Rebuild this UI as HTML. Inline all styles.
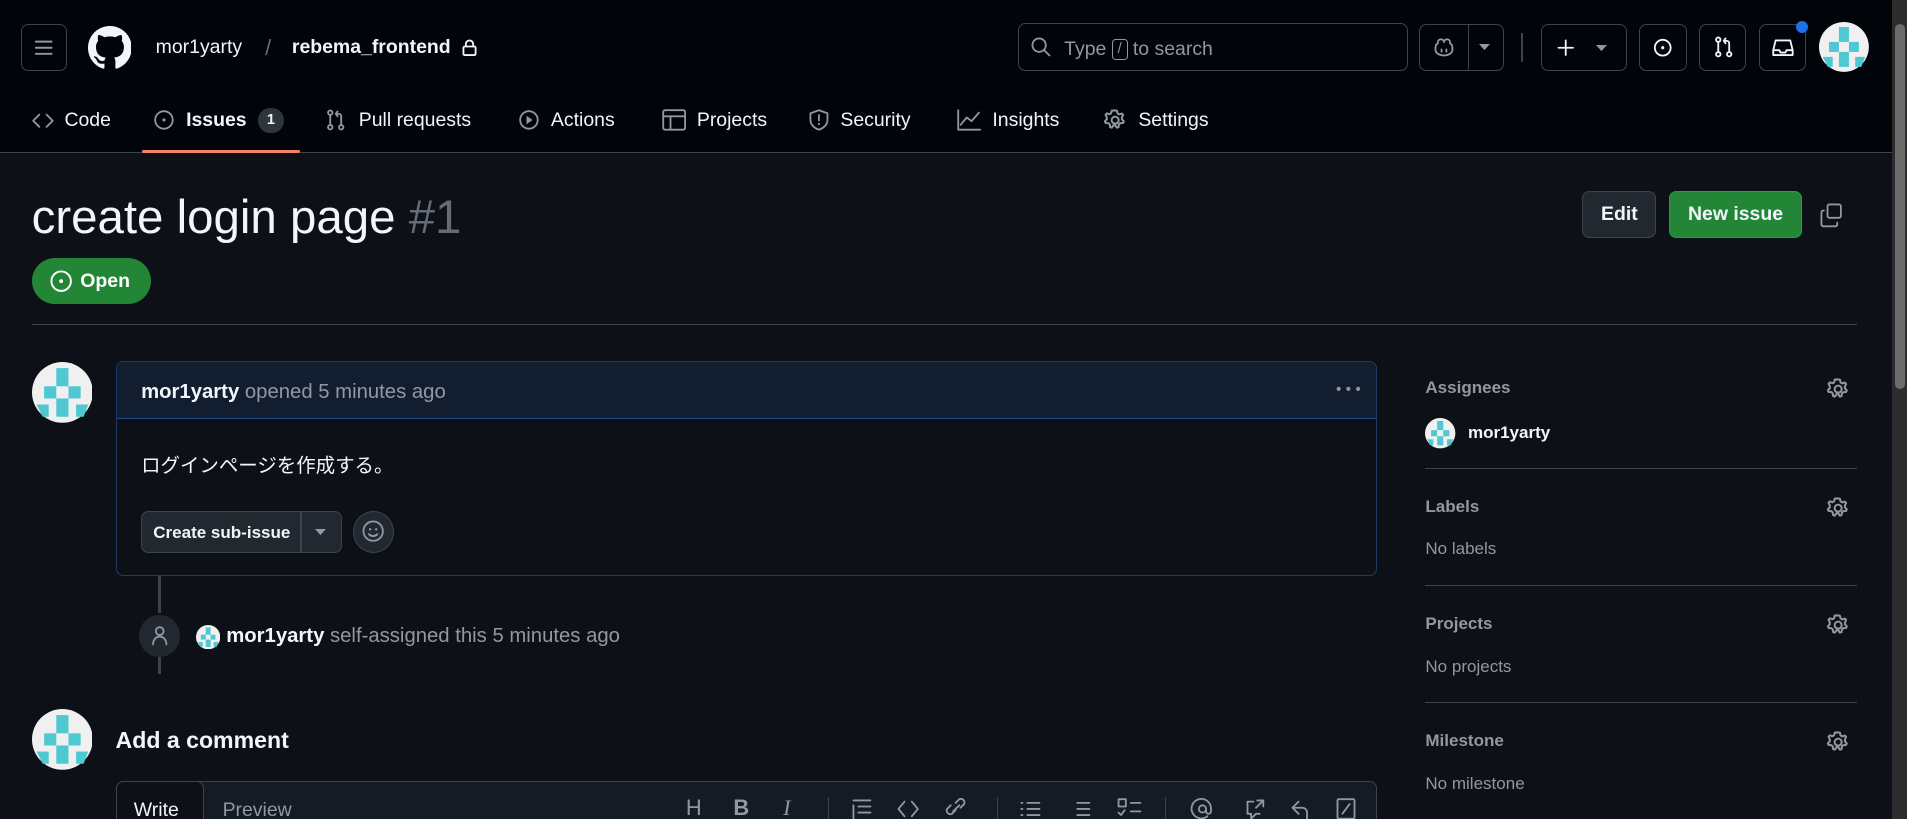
<!DOCTYPE html>
<html><head><meta charset="utf-8">
<style>
*{box-sizing:border-box;margin:0;padding:0}
html,body{width:1907px;height:819px;overflow:hidden;background:#0d1117}
#r{zoom:1.2162;width:1568px;height:673px;position:relative;font-family:"Liberation Sans","Noto Sans CJK JP",sans-serif;color:#f0f6fc;background:#0d1117;overflow:hidden}
.a{position:absolute}
svg{display:block}
.ic{fill:none;stroke:#9198a1;stroke-width:1.5;stroke-linecap:round;stroke-linejoin:round}
.btn{position:absolute;border:1px solid #3d444d;border-radius:6px}
.tab{position:absolute;top:88px;font-size:16px;color:#f0f6fc;display:flex;align-items:center;gap:9px;height:22px}
.muted{color:#9198a1}
.sbh{position:absolute;left:1172px;font-size:14px;font-weight:bold;color:#9198a1}
.sbt{position:absolute;left:1172px;font-size:14px;color:#9198a1}
.sep{position:absolute;left:1172px;width:355px;height:1px;background:#3d444d}
.gear{position:absolute;left:1501px}
</style></head><body><div id="r">
<svg width="0" height="0" style="position:absolute"><defs>
<g id="av"><circle cx="20" cy="20" r="20" fill="#f0f0f0"/><rect x="16" y="4" width="8" height="32" fill="#4fc8d2"/><rect x="8" y="16" width="24" height="8" fill="#4fc8d2"/><rect x="16" y="16" width="8" height="8" fill="#f0f0f0"/><path d="M3 28h8v8H7z M29 28h8l-3 8h-5z" fill="#4fc8d2"/></g>
<g id="gr"><path class="ic" d="M9 1.8l1.3.2.5 2 1.2.7 2-.6.9 1-.9 1.9v1.4l1.4 1.5-.6 1.2-2 .1-1 1-.3 2-1.3.3-1.1-1.7h-1.4l-1.1 1.7-1.3-.3-.3-2-1-1-2 -.1-.6-1.2 1.4-1.5V6.9l-.9-1.9.9-1 2 .6 1.2-.7.5-2z"/><circle class="ic" cx="9" cy="9" r="2.6"/></g>
</defs></svg>

<div class="a" style="left:0;top:0;width:1568px;height:126px;background:#010409;border-bottom:1px solid #3d444d"></div>
<div class="btn" style="left:17px;top:20px;width:38px;height:38px"></div>
<svg class="a" style="left:28px;top:31px" width="16" height="16"><path stroke="#9198a1" stroke-width="1.6" stroke-linecap="round" d="M1.5 3h13M1.5 8h13M1.5 13h13"/></svg>
<svg class="a" style="left:72px;top:21px" width="36" height="36" viewBox="0 0 16 16"><path fill="#f0f6fc" d="M8 0C3.58 0 0 3.58 0 8c0 3.54 2.29 6.53 5.47 7.59.4.07.55-.17.55-.38 0-.19-.01-.82-.01-1.49-2.01.37-2.53-.49-2.69-.94-.09-.23-.48-.94-.82-1.13-.28-.15-.68-.52-.01-.53.63-.01 1.08.58 1.23.82.72 1.21 1.87.87 2.33.66.07-.52.28-.87.51-1.07-1.78-.2-3.64-.89-3.64-3.95 0-.87.31-1.59.82-2.15-.08-.2-.36-1.02.08-2.12 0 0 .67-.21 2.2.82.64-.18 1.32-.27 2-.27.68 0 1.36.09 2 .27 1.53-1.04 2.2-.82 2.2-.82.44 1.1.16 1.92.08 2.12.51.56.82 1.27.82 2.15 0 3.07-1.87 3.75-3.65 3.95.29.25.54.73.54 1.48 0 1.07-.01 1.93-.01 2.2 0 .21.15.46.55.38A8.013 8.013 0 0016 8c0-4.42-3.58-8-8-8z"/></svg>
<div class="a" style="left:128px;top:30px;font-size:16px">mor1yarty</div>
<div class="a muted" style="left:218px;top:29px;font-size:18px;color:#656c76">/</div>
<div class="a" style="left:240px;top:30px;font-size:16px;font-weight:bold">rebema_frontend</div>
<svg class="a" style="left:379px;top:31px" width="14" height="16"><rect x="2" y="7" width="10" height="7" rx="1" class="ic" style="stroke:#f0f6fc"/><path d="M4 7V5a3 3 0 016 0v2" class="ic" style="stroke:#f0f6fc"/></svg>

<div class="btn" style="left:837px;top:19px;width:321px;height:39px;background:#010409"></div>
<svg class="a" style="left:847px;top:30px" width="18" height="18"><circle cx="7.5" cy="7.5" r="5.5" class="ic"/><path d="M11.5 11.5l4.5 4.5" class="ic"/></svg>
<div class="a muted" style="left:875px;top:31px;font-size:16px">Type <span style="display:inline-block;border:1px solid #9198a1;border-radius:3px;font-size:12px;padding:0 4px;line-height:15px;vertical-align:1px">/</span> to search</div>

<div class="btn" style="left:1167px;top:20px;width:70px;height:38px"></div>
<div class="a" style="left:1207px;top:20px;width:1px;height:38px;background:#3d444d"></div>
<svg class="a" style="left:1178px;top:30px" width="18" height="18"><path class="ic" d="M4 5c0-3 5-3 5 0 0-3 5-3 5 0v1c2 1 2 3 2 5 0 3-3 5-7 5s-7-2-7-5c0-2 0-4 2-5z"/><path class="ic" d="M7 11v2M11 11v2"/></svg>
<svg class="a" style="left:1216px;top:36px" width="10" height="6"><path d="M0 0h9L4.5 5z" fill="#9198a1"/></svg>
<div class="a" style="left:1251px;top:27px;width:1px;height:24px;background:#3d444d"></div>
<div class="btn" style="left:1267px;top:20px;width:71px;height:38px"></div>
<svg class="a" style="left:1279px;top:31px" width="16" height="16"><path class="ic" style="stroke:#f0f6fc" d="M8 2v12M2 8h12"/></svg>
<svg class="a" style="left:1312px;top:37px" width="10" height="6"><path d="M0 0h9L4.5 5z" fill="#9198a1"/></svg>
<div class="btn" style="left:1348px;top:20px;width:39px;height:38px"></div>
<svg class="a" style="left:1359px;top:31px" width="16" height="16"><circle cx="8" cy="8" r="6.5" class="ic" style="stroke:#f0f6fc"/><circle cx="8" cy="8" r="1.3" fill="#f0f6fc"/></svg>
<div class="btn" style="left:1397px;top:20px;width:39px;height:38px"></div>
<svg class="a" style="left:1409px;top:30px" width="16" height="18"><circle cx="3.5" cy="3" r="1.8" class="ic" style="stroke:#f0f6fc"/><circle cx="3.5" cy="15" r="1.8" class="ic" style="stroke:#f0f6fc"/><circle cx="12.5" cy="15" r="1.8" class="ic" style="stroke:#f0f6fc"/><path class="ic" style="stroke:#f0f6fc" d="M3.5 5v8M12.5 13V6a2 2 0 00-2-2H8M9.5 2L8 4l1.5 2"/></svg>
<div class="btn" style="left:1446px;top:20px;width:39px;height:38px"></div>
<svg class="a" style="left:1457px;top:31px" width="18" height="16"><path class="ic" style="stroke:#f0f6fc" d="M3 2h12l2 8v4H1v-4zM1 10h5l1 2h4l1-2h5"/></svg>
<div class="a" style="left:1477px;top:17px;width:10px;height:10px;border-radius:50%;background:#1f6feb"></div>
<svg class="a" style="left:1496px;top:18px" width="41" height="41" viewBox="0 0 40 40"><use href="#av"/></svg>

<div class="tab" style="left:26px"><svg width="18" height="16"><path class="ic" d="M6 3L1 8l5 5M12 3l5 5-5 5"/></svg>Code</div>
<div class="tab" style="left:126px;font-weight:bold"><svg width="18" height="18"><circle cx="9" cy="9" r="7.2" class="ic"/><circle cx="9" cy="9" r="1.3" fill="#9198a1"/></svg>Issues<span style="display:inline-block;background:#2f353d;border-radius:10px;font-size:12px;width:22px;text-align:center;line-height:20px">1</span></div>
<div class="a" style="left:117px;top:123px;width:130px;height:3px;border-radius:2px;background:#f78166"></div>
<div class="tab" style="left:268px"><svg width="18" height="18"><circle cx="3.5" cy="3" r="1.8" class="ic"/><circle cx="3.5" cy="15" r="1.8" class="ic"/><circle cx="12.5" cy="15" r="1.8" class="ic"/><path class="ic" d="M3.5 5v8M12.5 13V6a2 2 0 00-2-2H8M9.5 2L8 4l1.5 2"/></svg>Pull requests</div>
<div class="tab" style="left:426px"><svg width="18" height="18"><circle cx="9" cy="9" r="7.2" class="ic"/><path d="M7 5.5v7l5-3.5z" fill="#9198a1"/></svg>Actions</div>
<div class="tab" style="left:544px"><svg width="20" height="18"><rect x="1" y="1" width="18" height="16" rx="1.5" class="ic"/><path class="ic" d="M1 6h18M7 6v11"/></svg>Projects</div>
<div class="tab" style="left:664px"><svg width="18" height="18"><path class="ic" d="M9 1l7 2.5V9c0 4-3.5 7-7 8-3.5-1-7-4-7-8V3.5z"/><path class="ic" d="M9 5v4.5"/><circle cx="9" cy="12.3" r=".9" fill="#9198a1"/></svg>Security</div>
<div class="tab" style="left:787px"><svg width="20" height="18"><path class="ic" d="M1 1v16h18M3 13l5-6 4 3 6-7"/></svg>Insights</div>
<div class="tab" style="left:907px"><svg width="20" height="20" viewBox="0 0 18 18"><use href="#gr"/></svg>Settings</div>

<div class="a" style="left:26px;top:157px;font-size:39px;line-height:44px">create login page <span style="color:#656c76">#1</span></div>
<div class="btn" style="left:1301px;top:157px;width:61px;height:39px;background:#212830;font-size:16px;font-weight:bold;text-align:center;line-height:37px">Edit</div>
<div class="btn" style="left:1372px;top:157px;width:110px;height:39px;background:#238636;border-color:#2e9a40;font-size:16px;font-weight:bold;text-align:center;line-height:37px">New issue</div>
<svg class="a" style="left:1496px;top:166px" width="22" height="22"><rect x="7" y="2" width="11" height="11" rx="1.5" class="ic"/><path class="ic" d="M4 7H3.5A1.5 1.5 0 002 8.5v10A1.5 1.5 0 003.5 20h10a1.5 1.5 0 001.5-1.5V17"/></svg>
<div class="a" style="left:26px;top:212px;width:98px;height:38px;border-radius:19px;background:#238636"></div>
<svg class="a" style="left:40px;top:221px" width="20" height="20"><circle cx="10" cy="10" r="8" fill="none" stroke="#fff" stroke-width="1.6"/><circle cx="10" cy="10" r="1.6" fill="#fff"/></svg>
<div class="a" style="left:66px;top:222px;font-size:16px;font-weight:bold;color:#fff">Open</div>
<div class="a" style="left:26px;top:266px;width:1501px;height:1px;background:#3d444d"></div>

<svg class="a" style="left:26px;top:298px" width="50" height="50" viewBox="0 0 40 40"><use href="#av"/></svg>
<div class="a" style="left:95px;top:297px;width:1037px;height:177px;border:1px solid #1f3b63;border-radius:6px;overflow:hidden">
 <div style="height:47px;background:#121d2f;border-bottom:1px solid #1f4a86"></div>
</div>
<div class="a" style="left:116px;top:313px;font-size:16.7px"><b>mor1yarty</b> <span class="muted">opened 5 minutes ago</span></div>
<svg class="a" style="left:1098px;top:316px" width="22" height="8"><circle cx="3" cy="4" r="1.7" fill="#9198a1"/><circle cx="11" cy="4" r="1.7" fill="#9198a1"/><circle cx="19" cy="4" r="1.7" fill="#9198a1"/></svg>
<div class="a" style="left:116px;top:369px;font-size:16px">ログインページを作成する。</div>
<div class="btn" style="left:116px;top:420px;width:165px;height:35px;background:#212830"></div>
<div class="a" style="left:247px;top:420px;width:1px;height:35px;background:#3d444d"></div>
<div class="a" style="left:126px;top:430px;font-size:14px;font-weight:bold">Create sub-issue</div>
<svg class="a" style="left:259px;top:435px" width="10" height="6"><path d="M0 0h9L4.5 5z" fill="#9198a1"/></svg>
<div class="a" style="left:290px;top:420px;width:34px;height:35px;border-radius:50%;background:#212830;border:1px solid #3d444d"></div>
<svg class="a" style="left:297px;top:427px" width="20" height="20"><circle cx="10" cy="10" r="8" class="ic"/><circle cx="7.5" cy="8.5" r="1" fill="#9198a1"/><circle cx="12.5" cy="8.5" r="1" fill="#9198a1"/><path class="ic" d="M6.5 12.5c2 2 5 2 7 0"/></svg>

<div class="a" style="left:130px;top:474px;width:2px;height:30px;background:#3d444d"></div>
<div class="a" style="left:130px;top:540px;width:2px;height:14px;background:#3d444d"></div>
<div class="a" style="left:114px;top:506px;width:34px;height:34px;border-radius:50%;background:#212830"></div>
<svg class="a" style="left:123px;top:514px" width="16" height="18"><circle cx="8" cy="5" r="3.2" class="ic"/><path class="ic" d="M2.5 16c0-4 2.5-6.5 5.5-6.5S13.5 12 13.5 16"/></svg>
<svg class="a" style="left:161px;top:514px" width="20" height="20" viewBox="0 0 40 40"><use href="#av"/></svg>
<div class="a" style="left:186px;top:514px;font-size:16.7px"><b>mor1yarty</b> <span class="muted">self-assigned this 5 minutes ago</span></div>

<svg class="a" style="left:26px;top:583px" width="50" height="50" viewBox="0 0 40 40"><use href="#av"/></svg>
<div class="a" style="left:95px;top:598px;font-size:19px;font-weight:bold">Add a comment</div>
<div class="a" style="left:95px;top:642px;width:1037px;height:60px;border:1px solid #3d444d;border-radius:6px;background:#151b23"></div>
<div class="a" style="left:95px;top:642px;width:73px;height:40px;border:1px solid #3d444d;border-bottom:none;border-radius:6px 6px 0 0;background:#0d1117"></div>
<div class="a" style="left:110px;top:657px;font-size:16px">Write</div>
<div class="a muted" style="left:183px;top:657px;font-size:16px">Preview</div>
<div class="a muted" style="left:564px;top:654px;font-size:18px;letter-spacing:0">
<span style="position:absolute;left:0">H</span><span style="position:absolute;left:39px;font-weight:bold">B</span><span style="position:absolute;left:80px;font-style:italic;font-family:'Liberation Serif',serif">I</span></div>
<div class="a" style="left:681px;top:655px;width:1px;height:20px;background:#3d444d"></div>
<div class="a" style="left:820px;top:655px;width:1px;height:20px;background:#3d444d"></div>
<div class="a" style="left:958px;top:655px;width:1px;height:20px;background:#3d444d"></div>
<svg class="a" style="left:700px;top:656px" width="420" height="18"><g class="ic">
<path d="M2 2h14M6 7h10M6 12h10M2 6v11"/>
<path d="M44 3l-5 6 5 6M50 3l5 6-5 6"/>
<path d="M86 10l-3 3a3 3 0 01-4-4l3-3M90 8l3-3a3 3 0 00-4-4l-3 3M84 11l5-5"/>
<path d="M145 4h10M145 9h10M145 14h10M140 4h1M140 9h1M140 14h1"/>
<path d="M186 4h10M186 9h10M186 14h10"/>
<rect x="220" y="1" width="6" height="6"/><path d="M230 4h8M230 11h8M220 12l2 2 3-4"/>
<circle cx="289" cy="9" r="3"/><path d="M292 9v2a2 2 0 004 0V9a8 8 0 10-3 6"/>
<path d="M331 3h-5v10h3v4l4-4h3M334 2h5v5M339 2l-6 6"/>
<path d="M368 3l-5 5 5 5M363 8h8a4 4 0 014 4v5"/>
<rect x="400" y="1" width="14" height="16" rx="1"/><path d="M404 13l6-8"/>
</g></svg>

<div class="sbh" style="top:311px">Assignees</div>
<svg class="gear" style="top:310px" width="20" height="20" viewBox="0 0 18 18"><use href="#gr"/></svg>
<svg class="a" style="left:1172px;top:344px" width="25" height="25" viewBox="0 0 40 40"><use href="#av"/></svg>
<div class="a" style="left:1207px;top:348px;font-size:14px;font-weight:bold">mor1yarty</div>
<div class="sep" style="top:385px"></div>
<div class="sbh" style="top:409px">Labels</div>
<svg class="gear" style="top:408px" width="20" height="20" viewBox="0 0 18 18"><use href="#gr"/></svg>
<div class="sbt" style="top:443px">No labels</div>
<div class="sep" style="top:481px"></div>
<div class="sbh" style="top:505px">Projects</div>
<svg class="gear" style="top:504px" width="20" height="20" viewBox="0 0 18 18"><use href="#gr"/></svg>
<div class="sbt" style="top:540px">No projects</div>
<div class="sep" style="top:577px"></div>
<div class="sbh" style="top:601px">Milestone</div>
<svg class="gear" style="top:600px" width="20" height="20" viewBox="0 0 18 18"><use href="#gr"/></svg>
<div class="sbt" style="top:636px">No milestone</div>

<div class="a" style="left:1556px;top:0;width:12px;height:673px;background:#2c2c2c"></div>
<div class="a" style="left:1558px;top:20px;width:8px;height:300px;border-radius:4px;background:#6b6b6b"></div>
</div></body></html>
